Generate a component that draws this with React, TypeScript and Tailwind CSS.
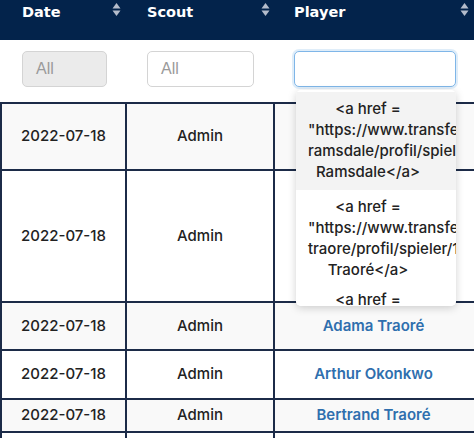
const rows = [
  { h: "h-[67px]", bg: "bg-[#f9f9f9]", player: "" },
  { h: "h-[132px]", bg: "bg-white", player: "" },
  { h: "h-[48px]", bg: "bg-[#f9f9f9]", player: "Adama Traoré" },
  { h: "h-[49px]", bg: "bg-white", player: "Arthur Okonkwo" },
  { h: "h-[33px]", bg: "bg-[#f9f9f9]", player: "Bertrand Traoré" },
]

const options = [
  {
    text: '<a href = "https://www.transfermarkt.com/aaron-ramsdale/profil/spieler/427568">Aaron Ramsdale</a>',
    cls: "bg-[#f3f3f3] h-[98px]",
  },
  {
    text: '<a href = "https://www.transfermarkt.com/adama-traore/profil/spieler/168987">Adama Traoré</a>',
    cls: "bg-white h-[93px]",
  },
  {
    text: '<a href = "https://www.transfermarkt.com/arthur-okonkwo/profil/spieler/486189">Arthur Okonkwo</a>',
    cls: "bg-white h-[40px]",
  },
]

function SortIcon() {
  return (
    <svg width="9" height="15" viewBox="0 0 9 15" className="shrink-0">
      <path d="M4.5 1 L8.5 6.5 L0.5 6.5 Z" fill="#b4bccb" />
      <path d="M4.5 14 L8.5 8.5 L0.5 8.5 Z" fill="#b4bccb" />
    </svg>
  )
}

export default function App() {
  return (
    <div className="relative w-[474px] h-[438px] overflow-hidden bg-white font-['Inter',sans-serif] text-[#222]">
      {/* Header */}
      <div className="grid grid-cols-[127px_148px_199px] h-[40px] bg-[#03234b] text-white font-['DejaVu_Sans',sans-serif] font-bold text-[14.5px]">
        <div className="flex items-start justify-between pl-[22px] pr-[6px] pt-[2px]">
          <span>Date</span>
          <SortIcon />
        </div>
        <div className="flex items-start justify-between pl-[20px] pr-[5px] pt-[2px]">
          <span>Scout</span>
          <SortIcon />
        </div>
        <div className="flex items-start justify-between pl-[19px] pr-[5px] pt-[2px]">
          <span>Player</span>
          <SortIcon />
        </div>
      </div>

      {/* Filters */}
      <div className="grid grid-cols-[127px_148px_199px] h-[62px] pt-[11px] font-['Liberation_Sans',sans-serif] text-[16px]">
        <div className="pl-[22px]">
          <div className="w-[85px] h-[36px] rounded-[5px] border border-[#d4d4d4] bg-[#ebebeb] text-[#9a9a9a] flex items-center pl-[13px]">
            All
          </div>
        </div>
        <div className="pl-[20px]">
          <div className="w-[107px] h-[36px] rounded-[5px] border border-[#d4d4d4] bg-white text-[#9a9a9a] flex items-center pl-[13px]">
            All
          </div>
        </div>
        <div className="pl-[19px]">
          <div className="w-[162px] h-[36px] rounded-[5px] border border-[#7fb6e8] bg-white shadow-[0_0_0_2px_rgba(128,182,232,0.25)]" />
        </div>
      </div>

      {/* Body */}
      <div className="border-l-2 border-[#1c2b48] font-medium">
        {rows.map((r, i) => (
          <div
            key={i}
            className={`grid grid-cols-[125px_148px_199px] border-t-2 border-[#1c2b48] ${r.h} ${r.bg} text-[15px]`}
          >
            <div className="flex items-center justify-center border-r-2 border-[#1c2b48]">2022-07-18</div>
            <div className="flex items-center justify-center border-r-2 border-[#1c2b48]">Admin</div>
            <div className="flex items-center justify-center pr-[2px] text-[#2f6fae] font-semibold">{r.player}</div>
          </div>
        ))}
        <div className="grid grid-cols-[125px_148px_199px] border-t-2 border-[#1c2b48] h-[40px] bg-white">
          <div className="border-r-2 border-[#1c2b48]" />
          <div className="border-r-2 border-[#1c2b48]" />
          <div />
        </div>
      </div>

      {/* Dropdown */}
      <div className="absolute left-[296px] top-[90px] w-[160px] h-[216px] overflow-hidden rounded-[5px] bg-white shadow-[0_2px_8px_rgba(0,0,0,0.18)] pt-[2px] text-[15px] leading-[21px] font-medium text-[#222]">
        {options.map((o, i) => (
          <div key={i} className={`${o.cls} overflow-hidden pl-[12px] pr-[28px] pt-[6px] text-center`}>
            {o.text}
          </div>
        ))}
      </div>
    </div>
  )
}
